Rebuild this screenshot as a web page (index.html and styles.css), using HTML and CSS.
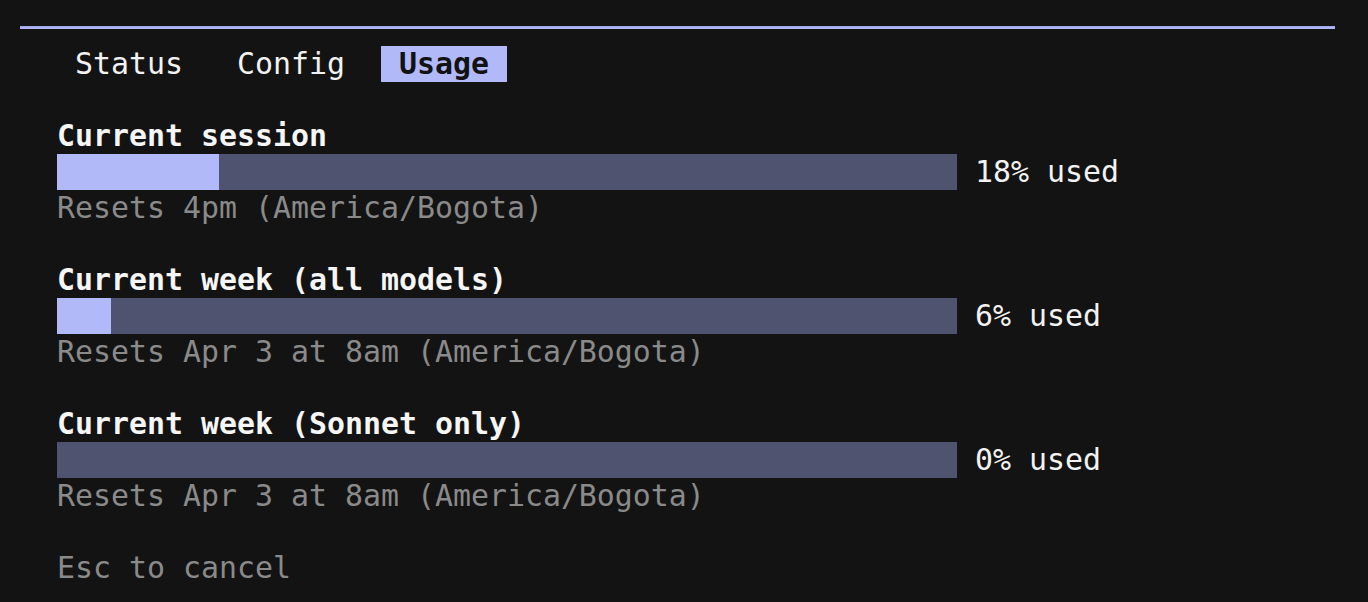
FILE: index.html
```html
<!DOCTYPE html>
<html lang="en">
<head>
<meta charset="utf-8">
<title>Usage</title>
<link rel="stylesheet" href="styles.css">
</head>
<body>
<main class="screen">
  <div class="rule-row"><div class="rule"></div></div>
  <nav class="tabs">
    <span class="tab">Status</span>
    <span class="tab">Config</span>
    <span class="tab active">Usage</span>
  </nav>
  <div class="meters">
    <section class="meter">
      <div class="label">Current session</div>
      <div class="bar-row">
        <div class="bar"><div class="fill" style="width:18%"></div></div>
        <span class="pct">18% used</span>
      </div>
      <div class="reset">Resets 4pm (America/Bogota)</div>
    </section>
    <section class="meter">
      <div class="label">Current week (all models)</div>
      <div class="bar-row">
        <div class="bar"><div class="fill" style="width:6%"></div></div>
        <span class="pct">6% used</span>
      </div>
      <div class="reset">Resets Apr 3 at 8am (America/Bogota)</div>
    </section>
    <section class="meter">
      <div class="label">Current week (Sonnet only)</div>
      <div class="bar-row">
        <div class="bar"><div class="fill" style="width:0%"></div></div>
        <span class="pct">0% used</span>
      </div>
      <div class="reset">Resets Apr 3 at 8am (America/Bogota)</div>
    </section>
  </div>
  <div class="hint">Esc to cancel</div>
</main>
</body>
</html>
```
FILE: styles.css
```css
html, body {
  margin: 0;
  padding: 0;
  background: #131313;
}

body {
  font-family: "DejaVu Sans Mono", "Liberation Mono", monospace;
  font-size: 29.9px;
  line-height: 36px;
  color: #f2f2f2;
  width: 1368px;
  height: 602px;
  overflow: hidden;
}

.screen {
  padding-top: 10px;
}

.rule-row {
  height: 36px;
  padding-left: 20px;
  box-sizing: border-box;
  padding-top: 16px;
}

.rule {
  width: 1315px;
  height: 3px;
  background: #adb5f5;
  border-top: 1px solid #9ea6e6;
  box-sizing: border-box;
}

.tabs {
  display: flex;
  gap: 18px;
  padding-left: 57px;
  height: 36px;
}

.tab {
  padding: 0 18px;
  white-space: pre;
}

.tab.active {
  background: #b1b9f9;
  color: #121212;
  font-weight: bold;
}

.meters {
  display: flex;
  flex-direction: column;
  gap: 36px;
  padding-left: 57px;
  margin-top: 36px;
}

.label {
  font-weight: bold;
  color: #f6f6f6;
  white-space: pre;
}

.bar-row {
  display: flex;
  align-items: center;
  gap: 18px;
  height: 36px;
}

.bar {
  width: 900px;
  height: 36px;
  background: #4f536f;
  display: flex;
}

.fill {
  height: 100%;
  background: #b1b9f9;
}

.pct {
  white-space: pre;
  color: #f2f2f2;
}

.reset {
  color: #8a8a8a;
  white-space: pre;
}

.hint {
  color: #8a8a8a;
  padding-left: 57px;
  margin-top: 36px;
  white-space: pre;
}
```
